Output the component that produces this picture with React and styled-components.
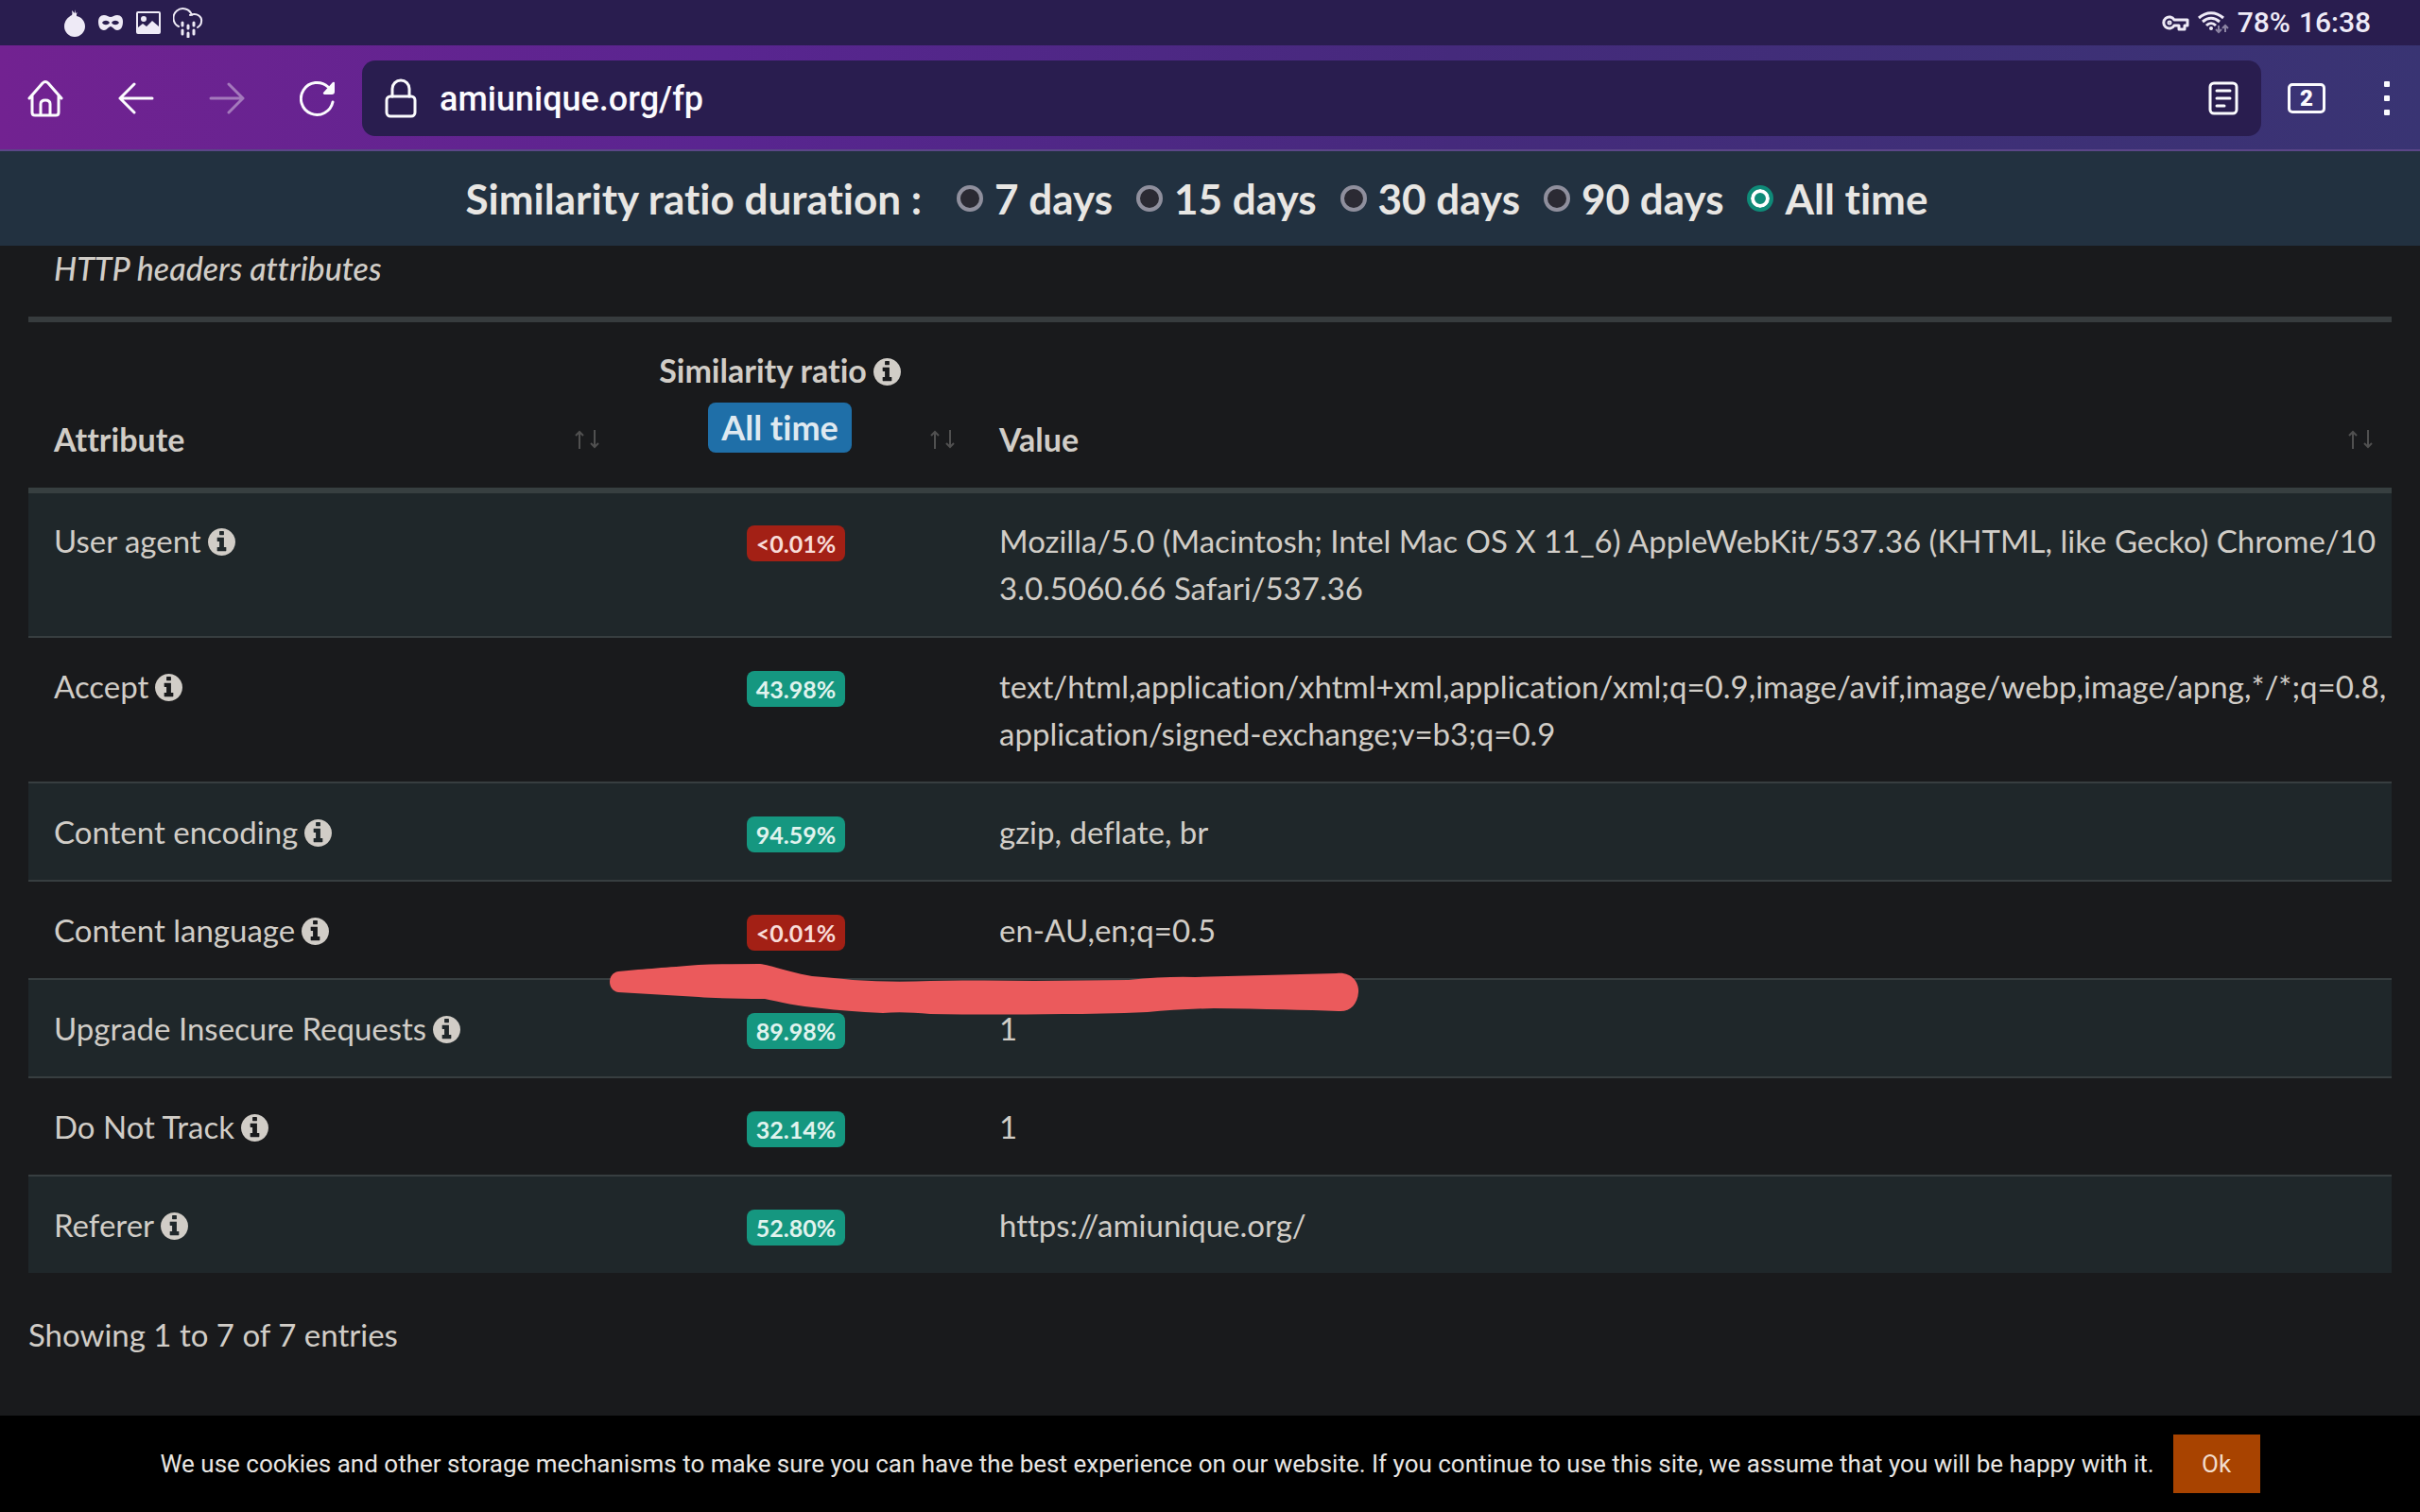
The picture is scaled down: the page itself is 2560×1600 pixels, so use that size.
import { useState } from "react";
import styled, { createGlobalStyle } from "styled-components";

const durations = ["7 days", "15 days", "30 days", "90 days", "All time"];

const attributes = [
  {
    name: "User agent",
    ratio: "<0.01%",
    rare: true,
    value:
      "Mozilla/5.0 (Macintosh; Intel Mac OS X 11_6) AppleWebKit/537.36 (KHTML, like Gecko) Chrome/103.0.5060.66 Safari/537.36",
  },
  {
    name: "Accept",
    ratio: "43.98%",
    value:
      "text/html,application/xhtml+xml,application/xml;q=0.9,image/avif,image/webp,image/apng,*/*;q=0.8,application/signed-exchange;v=b3;q=0.9",
  },
  { name: "Content encoding", ratio: "94.59%", value: "gzip, deflate, br" },
  { name: "Content language", ratio: "<0.01%", rare: true, value: "en-AU,en;q=0.5" },
  { name: "Upgrade Insecure Requests", ratio: "89.98%", value: "1" },
  { name: "Do Not Track", ratio: "32.14%", value: "1" },
  { name: "Referer", ratio: "52.80%", value: "https://amiunique.org/" },
];

const InfoIcon = () => (
  <Info viewBox="0 0 1536 1536" aria-hidden="true">
    <path d="M1024 1248v-160q0-14-9-23t-23-9h-96v-512q0-14-9-23t-23-9h-320q-14 0-23 9t-9 23v160q0 14 9 23t23 9h96v320h-96q-14 0-23 9t-9 23v160q0 14 9 23t23 9h448q14 0 23-9t9-23zm-128-896v-160q0-14-9-23t-23-9h-192q-14 0-23 9t-9 23v160q0 14 9 23t23 9h192q14 0 23-9t9-23zm640 416q0 209-103 385.500t-279.500 279.500-385.500 103-385.500-103-279.500-279.500-103-385.500 103-385.500 279.500-279.500 385.500-103 385.500 103 279.500 279.500 103 385.500z" />
  </Info>
);

const SortArrows = () => (
  <Sort aria-label="Sort">
    <svg width="26" height="20" viewBox="0 0 26 20" fill="none" stroke="currentColor" strokeWidth="2">
      <path d="M5 20V2M1 6l4-4 4 4M21 0v18M17 14l4 4 4-4" />
    </svg>
  </Sort>
);

const NotificationIcons = () => (
  <StatusGroup $gap={13}>
    <svg width="22" height="29" viewBox="0 0 22 29" fill="currentColor">
      <path d="M8 6C9 4 8 3 8 1l3 3 1-4 0 4 2-1c-1 1-1 2-1 4 5 1 9 5 9 11 0 6-5 11-11 11S0 24 0 18C0 12 4 8 8 6z" />
    </svg>
    <svg width="28" height="18" viewBox="0 0 28 18" fill="currentColor" fillRule="evenodd">
      <path d="M7 1c3 0 5 2 7 2s4-2 7-2c4 0 6 3 6 7 0 5-2 9-6 9-3 0-5-4-7-4s-4 4-7 4c-4 0-6-4-6-9 0-4 2-7 6-7zM5 9c2 3 6 3 8 0-2-3-6-3-8 0zm10 0c2 3 6 3 8 0-2-3-6-3-8 0z" />
    </svg>
    <svg width="26" height="24" viewBox="0 0 26 24" fill="currentColor" fillRule="evenodd">
      <path d="M2 0h22a2 2 0 0 1 2 2v20a2 2 0 0 1-2 2H2a2 2 0 0 1-2-2V2a2 2 0 0 1 2-2zm0 2v15l5-4 4 3 6-6 7 6V2zM8 5a3 3 0 1 1 0 6 3 3 0 0 1 0-6z" />
    </svg>
    <svg width="32" height="32" viewBox="0 0 32 32" fill="none" stroke="currentColor" strokeWidth="2" strokeLinecap="round">
      <path d="M6 20A10 10 0 1 1 20 8M18 8C26 5 31 10 30 15c0 3-1 4-4 6" />
      <path d="M10 16v3M16 19v3M22 16v3M10 24v4M16 27v4M22 24v4" strokeWidth="3" />
    </svg>
  </StatusGroup>
);

const App = () => {
  const [duration, setDuration] = useState("All time");

  return (
    <Page>
      <GlobalStyle />
      <StatusBar>
        <NotificationIcons />
        <StatusGroup $gap={9}>
          <svg width="29" height="18" viewBox="0 0 29 18" fill="none" stroke="currentColor" strokeWidth="3">
            <path d="M13 6h14v6h-3v4h-6v-4h-5a6 6 0 1 1 0-6z" strokeLinejoin="round" />
            <circle cx="8" cy="9" r="1" />
          </svg>
          <svg width="33" height="24" viewBox="0 0 33 24" fill="none" stroke="currentColor" strokeWidth="3">
            <path d="M1 7c8-7 18-7 26 0M5 11c6-5 12-5 18 0M9 15c3-3 7-3 10 0" />
            <circle cx="14" cy="18" r="2" fill="currentColor" stroke="none" />
            <path d="M22 15v7M19 19l3 3 3-3M29 22v-7M26 18l3-3 3 3" opacity=".5" strokeWidth="2" />
          </svg>
          <span>78%</span>
          <span>16:38</span>
        </StatusGroup>
      </StatusBar>

      <Toolbar>
        <NavButtons>
          <IconButton aria-label="Home">
            <svg width="38" height="40" viewBox="0 0 38 40">
              <path d="M2 20L16 4q3-3 6 0l14 16M5 17v18q0 3 3 3h22q3 0 3-3V17M14 38V26q0-4 5-4t5 4v12" />
            </svg>
          </IconButton>
          <IconButton aria-label="Back">
            <svg width="38" height="34" viewBox="0 0 38 34">
              <path d="M17 2L2 17l15 15M2 17h34" />
            </svg>
          </IconButton>
          <IconButton aria-label="Forward" $dim>
            <svg width="38" height="34" viewBox="0 0 38 34">
              <path d="M21 2l15 15-15 15M36 17H2" />
            </svg>
          </IconButton>
          <IconButton aria-label="Reload">
            <svg width="38" height="38" viewBox="0 0 38 38">
              <path d="M35 23A17 17 0 1 1 30 7" />
              <path d="M37 3v9q0 3-3 3H26q-2-1-1-2L35 2q2-1 2 1z" fill="currentColor" stroke="none" />
            </svg>
          </IconButton>
        </NavButtons>
        <AddressBar>
          <svg width="34" height="42" viewBox="0 0 34 42">
            <rect x="2" y="19" width="30" height="21" rx="4" />
            <path d="M8 19v-8a9 9 0 0 1 18 0v8" />
          </svg>
          <AddressInput aria-label="Address" defaultValue="amiunique.org/fp" />
          <IconButton aria-label="Reader view">
            <svg width="32" height="36" viewBox="0 0 32 36">
              <rect x="2" y="2" width="28" height="32" rx="4" />
              <path d="M9 10h14M9 18h14M9 26h8" />
            </svg>
          </IconButton>
        </AddressBar>
        <TabCount aria-label="Open tabs">2</TabCount>
        <MenuButton aria-label="Menu">
          <svg width="6" height="36" viewBox="0 0 6 36" fill="currentColor">
            <rect width="6" height="6" rx="1" />
            <rect y="15" width="6" height="6" rx="1" />
            <rect y="30" width="6" height="6" rx="1" />
          </svg>
        </MenuButton>
      </Toolbar>

      <DurationBar role="radiogroup" aria-labelledby="duration-title">
        <DurationTitle id="duration-title">Similarity ratio duration :</DurationTitle>
        {durations.map((label) => (
          <DurationLabel key={label}>
            <Radio
              name="duration"
              value={label}
              checked={duration === label}
              onChange={() => setDuration(label)}
            />
            {label}
          </DurationLabel>
        ))}
      </DurationBar>

      <Main>
        <SectionTitle>HTTP headers attributes</SectionTitle>
        <TableWrap>
          <Table>
            <colgroup>
              <NameCol />
              <RatioCol />
              <col />
            </colgroup>
            <thead>
              <tr>
                <HeadCell>
                  Attribute
                  <SortArrows />
                </HeadCell>
                <HeadCell $center>
                  Similarity ratio
                  <InfoIcon />
                  <DurationBadge>{duration}</DurationBadge>
                  <SortArrows />
                </HeadCell>
                <HeadCell>
                  Value
                  <SortArrows />
                </HeadCell>
              </tr>
            </thead>
            <tbody>
              {attributes.map(({ name, ratio, rare, value }) => (
                <Row key={name}>
                  <Cell>
                    {name}
                    <InfoIcon />
                  </Cell>
                  <Cell $center>
                    <RatioBadge $rare={rare}>{ratio}</RatioBadge>
                  </Cell>
                  <ValueCell>{value}</ValueCell>
                </Row>
              ))}
            </tbody>
          </Table>
          <Marker viewBox="0 0 794 54" aria-hidden="true">
            <path d="M10 8C40 5 60 4 95 1Q120 0 160 0C170 1 195 10 215 13Q240 15 258 17Q300 20 340 18Q400 17 450 18L550 17Q590 13 620 14L770 10C786 8 794 20 793 30C792 43 784 51 772 50Q720 48 640 47Q600 48 570 51Q520 53 480 53Q400 54 340 53Q310 50 290 52Q250 50 225 47C200 45 180 40 165 37Q120 37 95 35L10 30C-2 28-2 10 10 8z" />
          </Marker>
        </TableWrap>
        <Summary>Showing 1 to 7 of 7 entries</Summary>
      </Main>

      <CookieBar>
        <span>
          We use cookies and other storage mechanisms to make sure you can have the best experience on our website. If
          you continue to use this site, we assume that you will be happy with it.
        </span>
        <OkButton>Ok</OkButton>
      </CookieBar>
    </Page>
  );
};
export default App;

const GlobalStyle = createGlobalStyle`
  * {
    box-sizing: border-box;
  }
  body {
    margin: 0;
    background: #191a1c;
    color: #d1cdc7;
    font-family: Lato, sans-serif;
    font-size: 33px;
    line-height: 50px;
    font-variant-ligatures: none;
  }
`;

const Page = styled.div`
  display: flex;
  flex-direction: column;
  min-height: 100vh;
`;

const StatusBar = styled.div`
  display: flex;
  align-items: center;
  justify-content: space-between;
  height: 48px;
  padding: 0 52px 0 68px;
  background: #291d4f;
  color: #eeeaf6;
  font-family: Roboto, sans-serif;
  font-size: 30px;
  line-height: 48px;
  font-weight: 500;
`;

const StatusGroup = styled.div`
  display: flex;
  align-items: center;
  gap: ${({ $gap }) => $gap}px;
`;

const Toolbar = styled.header`
  display: flex;
  align-items: center;
  height: 112px;
  padding: 2px 32px 0 0;
  background: linear-gradient(90deg, #722291 0%, #592590 30%, #452a7c 60%, #393473 100%);
  border-bottom: 2px solid #5b4688;
  color: #fbfbfe;
  & svg {
    display: block;
    flex: none;
  }
`;

const NavButtons = styled.nav`
  display: flex;
  gap: 58px;
  padding: 0 28px 0 29px;
`;

const IconButton = styled.button`
  display: flex;
  align-items: center;
  justify-content: center;
  padding: 0;
  border: 0;
  background: none;
  color: inherit;
  opacity: ${({ $dim }) => ($dim ? 0.4 : 1)};
  & svg {
    fill: none;
    stroke: currentColor;
    stroke-width: 3px;
    stroke-linecap: round;
    stroke-linejoin: round;
  }
`;

const AddressBar = styled.div`
  display: flex;
  flex: 1;
  align-items: center;
  gap: 24px;
  height: 80px;
  padding: 0 24px 0 24px;
  border-radius: 14px;
  background: #291d4f;
  & svg {
    fill: none;
    stroke: currentColor;
    stroke-width: 3px;
    stroke-linecap: round;
  }
`;

const AddressInput = styled.input`
  flex: 1;
  min-width: 0;
  padding: 2px 0 0;
  border: 0;
  outline: 0;
  background: none;
  color: inherit;
  font: 500 36px Roboto, sans-serif;
`;

const TabCount = styled.button`
  width: 40px;
  height: 32px;
  margin: 0 62px 0 28px;
  padding: 0;
  border: 3px solid currentColor;
  border-radius: 5px;
  background: none;
  color: inherit;
  font: 900 24px/24px Roboto, sans-serif;
`;

const MenuButton = styled.button`
  padding: 0;
  border: 0;
  background: none;
  color: inherit;
`;

const DurationBar = styled.div`
  display: flex;
  align-items: center;
  justify-content: center;
  gap: 25px;
  height: 100px;
  padding-right: 28px;
  background: #223140;
  color: #e8e6e3;
  font-size: 44px;
  font-weight: 700;
`;

const DurationTitle = styled.span`
  margin-right: 12px;
`;

const DurationLabel = styled.label`
  display: flex;
  align-items: center;
  gap: 12px;
`;

const Radio = styled.input.attrs({ type: "radio" })`
  appearance: none;
  width: 28px;
  height: 28px;
  margin: 0;
  border: 4px solid #8f8f9d;
  border-radius: 50%;
  background: #2b2a33;
  &:checked {
    border-color: #0f8a78;
    background: #0f8a78;
    box-shadow: inset 0 0 0 4px #fff;
  }
`;

const Main = styled.main`
  flex: 1;
  padding: 0 30px;
`;

const SectionTitle = styled.h2`
  margin: 0;
  padding: 0 27px 27px;
  font-size: 34px;
  font-style: italic;
  font-weight: 500;
  line-height: 48px;
`;

const TableWrap = styled.div`
  position: relative;
`;

const Table = styled.table`
  width: 100%;
  table-layout: fixed;
  border-spacing: 0;
`;

const NameCol = styled.col`
  width: 624px;
`;

const RatioCol = styled.col`
  width: 376px;
`;

const HeadCell = styled.th`
  position: relative;
  padding: 26px 61px 26px 27px;
  border-top: 6px solid #373c3e;
  border-bottom: 6px solid #373f40;
  font-size: 34px;
  font-weight: 700;
  text-align: ${({ $center }) => ($center ? "center" : "left")};
  vertical-align: bottom;
`;

const Sort = styled.button`
  position: absolute;
  right: 20px;
  bottom: 41px;
  padding: 0;
  border: 0;
  background: none;
  color: #505050;
  & svg {
    display: block;
  }
`;

const Row = styled.tr`
  &:nth-child(odd) {
    background: #1f272a;
  }
`;

const Cell = styled.td`
  padding: 26px 27px;
  border-top: 2px solid #373e40;
  text-align: ${({ $center }) => ($center ? "center" : "left")};
  vertical-align: top;
  ${Row}:first-child & {
    padding-top: 25px;
    border-top: 0;
  }
`;

const ValueCell = styled(Cell)`
  padding-right: 4px;
  word-break: break-all;
`;

const DurationBadge = styled.span`
  display: block;
  width: fit-content;
  margin: 9px auto 11px;
  padding: 0 14px;
  border-radius: 8px;
  background: #1f6fa8;
  color: #dfe9f0;
  font-size: 36px;
  line-height: 53px;
`;

const RatioBadge = styled.span`
  display: inline-block;
  padding: 0 10px;
  border-radius: 8px;
  background: ${({ $rare }) => ($rare ? "#a32015" : "#159780")};
  color: ${({ $rare }) => ($rare ? "#f8dcd8" : "#e0f3ee")};
  font-size: 25px;
  font-weight: 700;
  line-height: 38px;
`;

const Info = styled.svg`
  width: 29px;
  height: 29px;
  margin-left: 7px;
  fill: currentColor;
  vertical-align: -3px;
`;

const Marker = styled.svg`
  position: absolute;
  left: 614px;
  top: 685px;
  width: 794px;
  height: 54px;
  fill: #eb5a5c;
  pointer-events: none;
`;

const Summary = styled.p`
  margin: 0;
  padding: 40px 0;
`;

const CookieBar = styled.footer`
  display: flex;
  align-items: center;
  justify-content: center;
  gap: 20px;
  height: 102px;
  background: #000;
  color: #e8e6e3;
  font-family: Roboto, sans-serif;
  font-size: 26px;
`;

const OkButton = styled.button`
  width: 92px;
  height: 62px;
  padding: 0;
  border: 0;
  background: #a84300;
  color: #f2dccb;
  font: inherit;
`;
